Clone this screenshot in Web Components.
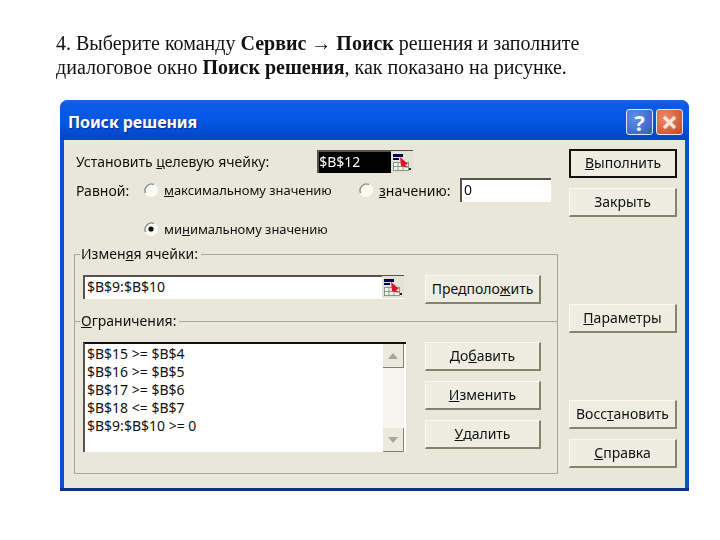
<!DOCTYPE html>
<html>
<head>
<meta charset="utf-8">
<style>
  html, body { margin: 0; background: #fff; }
  body { width: 720px; height: 540px; overflow: hidden; }
</style>
</head>
<body>
<task-text>4. Выберите команду <b>Сервис → Поиск</b> решения и заполните<br>диалоговое окно <b>Поиск решения</b>, как показано на рисунке.</task-text>

<solver-dialog>
  <span slot="title">Поиск решения</span>

  <div class="left" slot="left">
    <div class="row target">
      <span class="lbl">Установить <u>ц</u>елевую ячейку:</span>
      <ref-edit selected width="96">$B$12</ref-edit>
    </div>
    <div class="row equal">
      <span class="eq">Равной:</span>
      <win-radio class="r1 small"><u>м</u>аксимальному значению</win-radio>
      <win-radio class="r2"><u>з</u>начению:</win-radio>
      <span class="val">0</span>
    </div>
    <div class="row minrow">
      <win-radio class="small" checked>ми<u>н</u>имальному значению</win-radio>
    </div>
    <group-box class="g1">
      <span slot="legend">Измен<u>я</u>я ячейки:</span>
      <div class="g1-row">
        <ref-edit wide>$B$9:$B$10</ref-edit>
        <win-button wide>Предполо<u>ж</u>ить</win-button>
      </div>
    </group-box>
    <group-box class="g2">
      <span slot="legend"><u>О</u>граничения:</span>
      <div class="g2-row">
        <constraint-list>
          <div>$B$15 &gt;= $B$4</div>
          <div>$B$16 &gt;= $B$5</div>
          <div>$B$17 &gt;= $B$6</div>
          <div>$B$18 &lt;= $B$7</div>
          <div>$B$9:$B$10 &gt;= 0</div>
        </constraint-list>
        <div class="g2-btns">
          <win-button wide>До<u>б</u>авить</win-button>
          <win-button wide><u>И</u>зменить</win-button>
          <win-button wide><u>У</u>далить</win-button>
        </div>
      </div>
    </group-box>
  </div>

  <div class="right" slot="right">
    <win-button default><u>В</u>ыполнить</win-button>
    <win-button>Закрыть</win-button>
    <win-button class="params"><u>П</u>араметры</win-button>
    <win-button class="restore">Восс<u>т</u>ановить</win-button>
    <win-button><u>С</u>правка</win-button>
  </div>
</solver-dialog>

<script>
const uiFont = '"Noto Sans", "DejaVu Sans", sans-serif';

const refIcon = `
  <svg width="22" height="22" viewBox="0 0 22 22">
    <rect x="0" y="0" width="22" height="22" fill="#e4e2d4"/>
    <rect x="2" y="3" width="10" height="3" fill="#000048"/>
    <rect x="2" y="7" width="6" height="2" fill="#000048"/>
    <rect x="2.500" y="11.500" width="15" height="8" fill="#f4f4ec" stroke="#7f9a88"/>
    <path d="M7 12v8M12 12v8M2 15.500h15" stroke="#7f9a88" fill="none"/>
    <path d="M9 6l8 7-3 1 3 3-7-2z" fill="#e0102c"/>
    <rect x="18" y="17" width="2" height="2" fill="#222"/>
  </svg>`;

class TaskText extends HTMLElement {
  constructor() {
    super();
    this.attachShadow({ mode: "open" });
    this.shadowRoot.innerHTML = `
      <style>
        :host {
          box-sizing: border-box;
          color: #111;
          display: block;
          filter: blur(0.3px);
          font: 20px/24px "Liberation Serif", serif;
          height: 100px;
          padding: 31px 0 0 56px;
          white-space: nowrap;
        }
      </style>
      <slot></slot>`;
  }
}

class SolverDialog extends HTMLElement {
  constructor() {
    super();
    this.attachShadow({ mode: "open" });
    this.shadowRoot.innerHTML = `
      <style>
        :host {
          background: #0a50d0;
          border-bottom: 3px solid #08308c;
          border-radius: 8px 8px 0 0;
          box-sizing: border-box;
          color: #111;
          display: block;
          filter: blur(0.4px);
          font-family: ${uiFont};
          font-size: 14px;
          height: 391px;
          margin-left: 60px;
          padding: 0 4px;
          width: 629px;
        }
        .title {
          align-items: center;
          background: linear-gradient(#1a68de 0, #0a5ae4 10%, #0558e6 50%, #0044c4 100%);
          border-radius: 8px 8px 0 0;
          box-sizing: border-box;
          color: #fff;
          display: flex;
          font-size: 16px;
          font-weight: 700;
          gap: 3px;
          height: 40px;
          margin: 0 -4px;
          padding: 4px 6px 0 8px;
          text-shadow: 1px 1px 1px #0a2f90;
        }
        .title .name { flex: 1; letter-spacing: -0.1px; }
        .cap {
          align-items: center;
          border: 1px solid #dfe8fa;
          border-radius: 3px;
          box-sizing: border-box;
          display: flex;
          font-size: 22px;
          height: 26px;
          justify-content: center;
          text-shadow: none;
          width: 27px;
        }
        .help { background: radial-gradient(circle at 30% 30%, #5f8fe8, #2f5cc0); }
        .close { background: radial-gradient(circle at 30% 30%, #e88868, #c84a22); }
        .body {
          background: #e9e7d9;
          box-sizing: border-box;
          display: flex;
          height: 348px;
        }
        .left-col { flex: none; width: 505px; }
        .right-col { flex: none; padding-top: 9px; width: 108px; }
        ::slotted(.left) { display: block; }
      </style>
      <div class="title">
        <span class="name"><slot name="title"></slot></span>
        <span class="cap help">?</span>
        <span class="cap close">
          <svg width="17" height="17" viewBox="0 0 17 17"><path d="M3 3l11 11M14 3L3 14" stroke="#f8e4d8" stroke-width="3.500" fill="none"/></svg>
        </span>
      </div>
      <div class="body">
        <div class="left-col"><slot name="left"></slot></div>
        <div class="right-col"><slot name="right"></slot></div>
      </div>`;
  }
}

class WinButton extends HTMLElement {
  constructor() {
    super();
    this.attachShadow({ mode: "open" });
    this.shadowRoot.innerHTML = `
      <style>
        :host {
          align-items: center;
          background: #eeede2;
          border-bottom: 2px solid #85836f;
          border-left: 1px solid #fbfaf2;
          border-right: 2px solid #85836f;
          border-top: 1px solid #fbfaf2;
          box-sizing: border-box;
          display: flex;
          font-size: 14px;
          height: 29px;
          justify-content: center;
          padding-bottom: 2px;
          width: 108px;
        }
        :host([default]) { border: 2px solid #111; }
        :host([wide]) { width: 116px; }
      </style>
      <slot></slot>`;
  }
}

class WinRadio extends HTMLElement {
  constructor() {
    super();
    this.attachShadow({ mode: "open" });
    const dot = this.hasAttribute("checked") ? '<circle cx="8" cy="8" r="2.600" fill="#111"/>' : "";
    this.shadowRoot.innerHTML = `
      <style>
        :host {
          align-items: center;
          display: inline-flex;
          gap: 5px;
          white-space: nowrap;
        }
        :host(.small) { font-size: 13px; letter-spacing: -0.05px; }
        svg { display: block; flex: none; }
      </style>
      <svg width="16" height="16" viewBox="0 0 16 16">
        <circle cx="8" cy="8" r="7" fill="#fbfbf6"/>
        <path d="M2.500 11A6.500 6.500 0 0 1 11 2.500" stroke="#8a8a80" stroke-width="1.400" fill="none"/>
        ${dot}
      </svg>
      <span><slot></slot></span>`;
  }
}

class RefEdit extends HTMLElement {
  constructor() {
    super();
    this.attachShadow({ mode: "open" });
    this.shadowRoot.innerHTML = `
      <style>
        :host {
          align-items: stretch;
          background: #fff;
          border-left: 2px solid #55544c;
          border-top: 2px solid #55544c;
          box-sizing: border-box;
          display: flex;
          font-size: 14px;
          height: 23px;
          width: 96px;
        }
        :host([wide]) { height: 24px; width: 321px; }
        .text { flex: 1; line-height: 20px; padding-left: 2px; white-space: nowrap; }
        :host([selected]) .text { background: #000; color: #fff; padding-left: 0; }
        svg { display: block; flex: none; margin-top: -1px; }
      </style>
      <span class="text"><slot></slot></span>
      ${refIcon}`;
  }
}

class GroupBox extends HTMLElement {
  constructor() {
    super();
    this.attachShadow({ mode: "open" });
    this.shadowRoot.innerHTML = `
      <style>
        :host {
          border-left: 1px solid #a8a698;
          border-right: 1px solid #a8a698;
          border-top: 1px solid #a8a698;
          box-sizing: border-box;
          display: block;
          margin-left: 10px;
          position: relative;
          width: 484px;
        }
        .legend {
          background: #e9e7d9;
          left: 5px;
          line-height: 18px;
          padding: 0 3px 0 1px;
          position: absolute;
          top: -10px;
        }
      </style>
      <div class="legend"><slot name="legend"></slot></div>
      <slot></slot>`;
  }
}

class ConstraintList extends HTMLElement {
  constructor() {
    super();
    this.attachShadow({ mode: "open" });
    this.shadowRoot.innerHTML = `
      <style>
        :host {
          background: #fff;
          border-left: 2px solid #55544c;
          border-top: 2px solid #111;
          box-sizing: border-box;
          display: flex;
          height: 110px;
          width: 323px;
        }
        .items { flex: 1; line-height: 18px; padding: 1px 0 0 2px; }
        .bar {
          background: #f6f5ee;
          display: flex;
          flex: none;
          flex-direction: column;
          justify-content: space-between;
          margin-right: 2px;
          width: 21px;
        }
        .arrow {
          align-items: center;
          background: #eceadf;
          border-bottom: 1px solid #85836f;
          border-right: 1px solid #85836f;
          box-sizing: border-box;
          display: flex;
          height: 24px;
          justify-content: center;
        }
      </style>
      <div class="items"><slot></slot></div>
      <div class="bar">
        <div class="arrow"><svg width="10" height="6"><path d="M5 0l5 6H0z" fill="#a8a698"/></svg></div>
        <div class="arrow"><svg width="10" height="6"><path d="M5 6l5-6H0z" fill="#a8a698"/></svg></div>
      </div>`;
  }
}

customElements.define("task-text", TaskText);
customElements.define("solver-dialog", SolverDialog);
customElements.define("win-button", WinButton);
customElements.define("win-radio", WinRadio);
customElements.define("ref-edit", RefEdit);
customElements.define("group-box", GroupBox);
customElements.define("constraint-list", ConstraintList);
</script>

<style>
  /* layout of the dialog's own light-dom content */
  .left { box-sizing: border-box; height: 348px; }
  .row { align-items: center; display: flex; padding-left: 12px; }
  .target { gap: 48px; height: 23px; margin-top: 10px; }
  .equal { height: 24px; margin-top: 5px; }
  .eq { width: 67px; }
  .r1 { width: 215px; }
  .r2 { width: 102px; }
  .val {
    background: #fff;
    border-left: 2px solid #55544c;
    border-top: 2px solid #55544c;
    box-sizing: border-box;
    height: 24px;
    line-height: 20px;
    padding-left: 2px;
    width: 91px;
  }
  .minrow { height: 20px; margin-top: 17px; padding-left: 79px; }
  .g1 { height: 67px; margin-top: 15px; }
  .g1-row { align-items: flex-start; display: flex; gap: 21px; padding: 20px 0 0 8px; }
  .g2 { border-bottom: 1px solid #a8a698; height: 153px; }
  .g2-row { display: flex; gap: 19px; padding: 20px 0 0 8px; }
  .g2-btns { display: flex; flex-direction: column; gap: 10px; }
  .right win-button + win-button { margin-top: 10px; }
  .right .params { margin-top: 87px; }
  .right .restore { margin-top: 67px; }
</style>
</body>
</html>
